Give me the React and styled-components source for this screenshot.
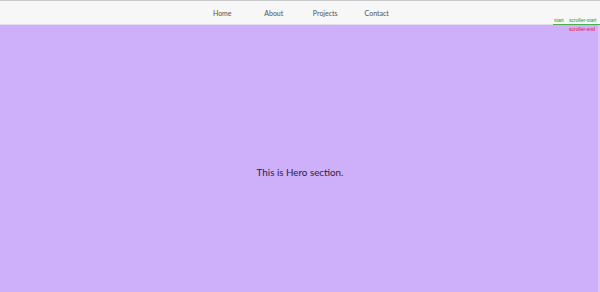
import React from "react";
import styled, { createGlobalStyle } from "styled-components";

const Global = createGlobalStyle`
  html, body { margin: 0; padding: 0; }
  body { font-family: Lato, "Noto Sans", sans-serif; background: #cdb0f9; overflow: hidden; }
`;

const Page = styled.div`
  display: flex;
  flex-direction: column;
  height: 292px;
  position: relative;
`;

const Nav = styled.nav`
  background: #f7f7f8;
  border-top: 1px solid #c9c9cb;
  border-bottom: 1px solid #e4dfee;
  display: flex;
  justify-content: center;
  align-items: center;
  box-sizing: border-box;
  height: 25px;
  padding-top: 1px;
`;

const Links = styled.ul`
  list-style: none;
  margin: 0;
  padding: 0;
  display: grid;
  grid-template-columns: repeat(4, 51.5px);
  margin-left: -1px;
`;

const Link = styled.li`
  text-align: center;
  font-size: 7px;
  color: #505055;
`;

const Hero = styled.section`
  flex: 1;
  display: flex;
  align-items: center;
  justify-content: center;
  padding-top: 27px;
  background: #cdb0f9;
`;

const HeroText = styled.p`
  margin: 0;
  font-size: 9.8px;
  color: #2b2338;
`;

const Marker = styled.div`
  position: absolute;
  font-family: "Liberation Sans", Arial, sans-serif;
  font-size: 5px;
  line-height: 6px;
  color: ${p => p.$c};
  white-space: nowrap;
`;

const StartLine = styled.div`
  position: absolute;
  left: 553px;
  right: 0;
  top: 24px;
  height: 1px;
  background: #4caf4c;
`;

const Scrollbar = styled.div`
  position: absolute;
  right: 0;
  top: 25px;
  bottom: 0;
  width: 2px;
  background: #dcc6fb;
`;

export default function App() {
  return (
    <>
      <Global />
      <Page>
        <Nav>
          <Links>
            {["Home", "About", "Projects", "Contact"].map(t => (
              <Link key={t}>{t}</Link>
            ))}
          </Links>
        </Nav>
        <Hero>
          <HeroText>This is Hero section.</HeroText>
        </Hero>
        <Marker $c="#1a9a1a" style={{ left: 554, top: 17 }}>start</Marker>
        <Marker $c="#1a9a1a" style={{ left: 569, top: 17 }}>scroller-start</Marker>
        <StartLine />
        <Marker $c="#e0103a" style={{ left: 569, top: 26 }}>scroller-end</Marker>
        <Scrollbar />
      </Page>
    </>
  );
}
